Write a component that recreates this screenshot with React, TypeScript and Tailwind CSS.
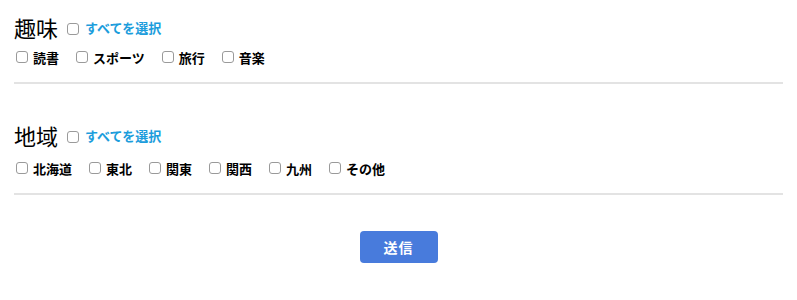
import { useState } from 'react';

const hobbies = ['読書', 'スポーツ', '旅行', '音楽'];
const regions = ['北海道', '東北', '関東', '関西', '九州', 'その他'];

const boxClass =
    'appearance-none shrink-0 w-[12px] h-[12px] border border-[#9a9a9a] rounded-[3px] bg-white checked:bg-[#487bdc] checked:border-[#487bdc]';

function Section({ title, items, className, rowClass }: { title: string; items: string[]; className?: string; rowClass: string }) {
    const [checked, setChecked] = useState<string[]>([]);
    const all = checked.length === items.length;

    const toggle = (item: string) =>
        setChecked(prev => (prev.includes(item) ? prev.filter(i => i !== item) : [...prev, item]));

    return (
        <div className={className}>
            <div className="flex items-center h-[30px]">
                <h2 className="text-[22px] font-normal leading-none text-black">{title}</h2>
                <input
                    type="checkbox"
                    checked={all}
                    onChange={() => setChecked(all ? [] : items)}
                    className={boxClass + ' ml-[9px] mt-[3px]'}
                />
                <span className="ml-[6px] mt-[1px] text-[13px] font-bold text-[#1c9ddc] leading-none">すべてを選択</span>
            </div>
            <div className={'flex items-center h-[16px] pl-[2px] gap-[17px] ' + rowClass}>
                {items.map(item => (
                    <label key={item} className="flex items-center gap-[5px] text-[13px] font-bold text-black leading-none">
                        <input
                            type="checkbox"
                            checked={checked.includes(item)}
                            onChange={() => toggle(item)}
                            className={boxClass}
                        />
                        {item}
                    </label>
                ))}
            </div>
        </div>
    );
}

export default function App() {
    return (
        <div
            className="px-[14px] pt-[12px] bg-white min-h-[300px]"
            style={{ fontFamily: '"Noto Sans CJK JP", "Noto Sans", sans-serif' }}
        >
            <Section title="趣味" items={hobbies} rowClass="mt-[7px]" />
            <div className="h-[2px] bg-[#e3e3e3] mt-[17px]" />
            <Section title="地域" items={regions} className="mt-[36px]" rowClass="mt-[10px]" />
            <div className="h-[2px] bg-[#e3e3e3] mt-[17px]" />
            <div className="flex justify-center mt-[36px]">
                <button className="w-[78px] h-[32px] rounded-[4px] bg-[#487bdc] text-white text-[14px] font-bold tracking-[1px]">
                    送信
                </button>
            </div>
        </div>
    );
}
